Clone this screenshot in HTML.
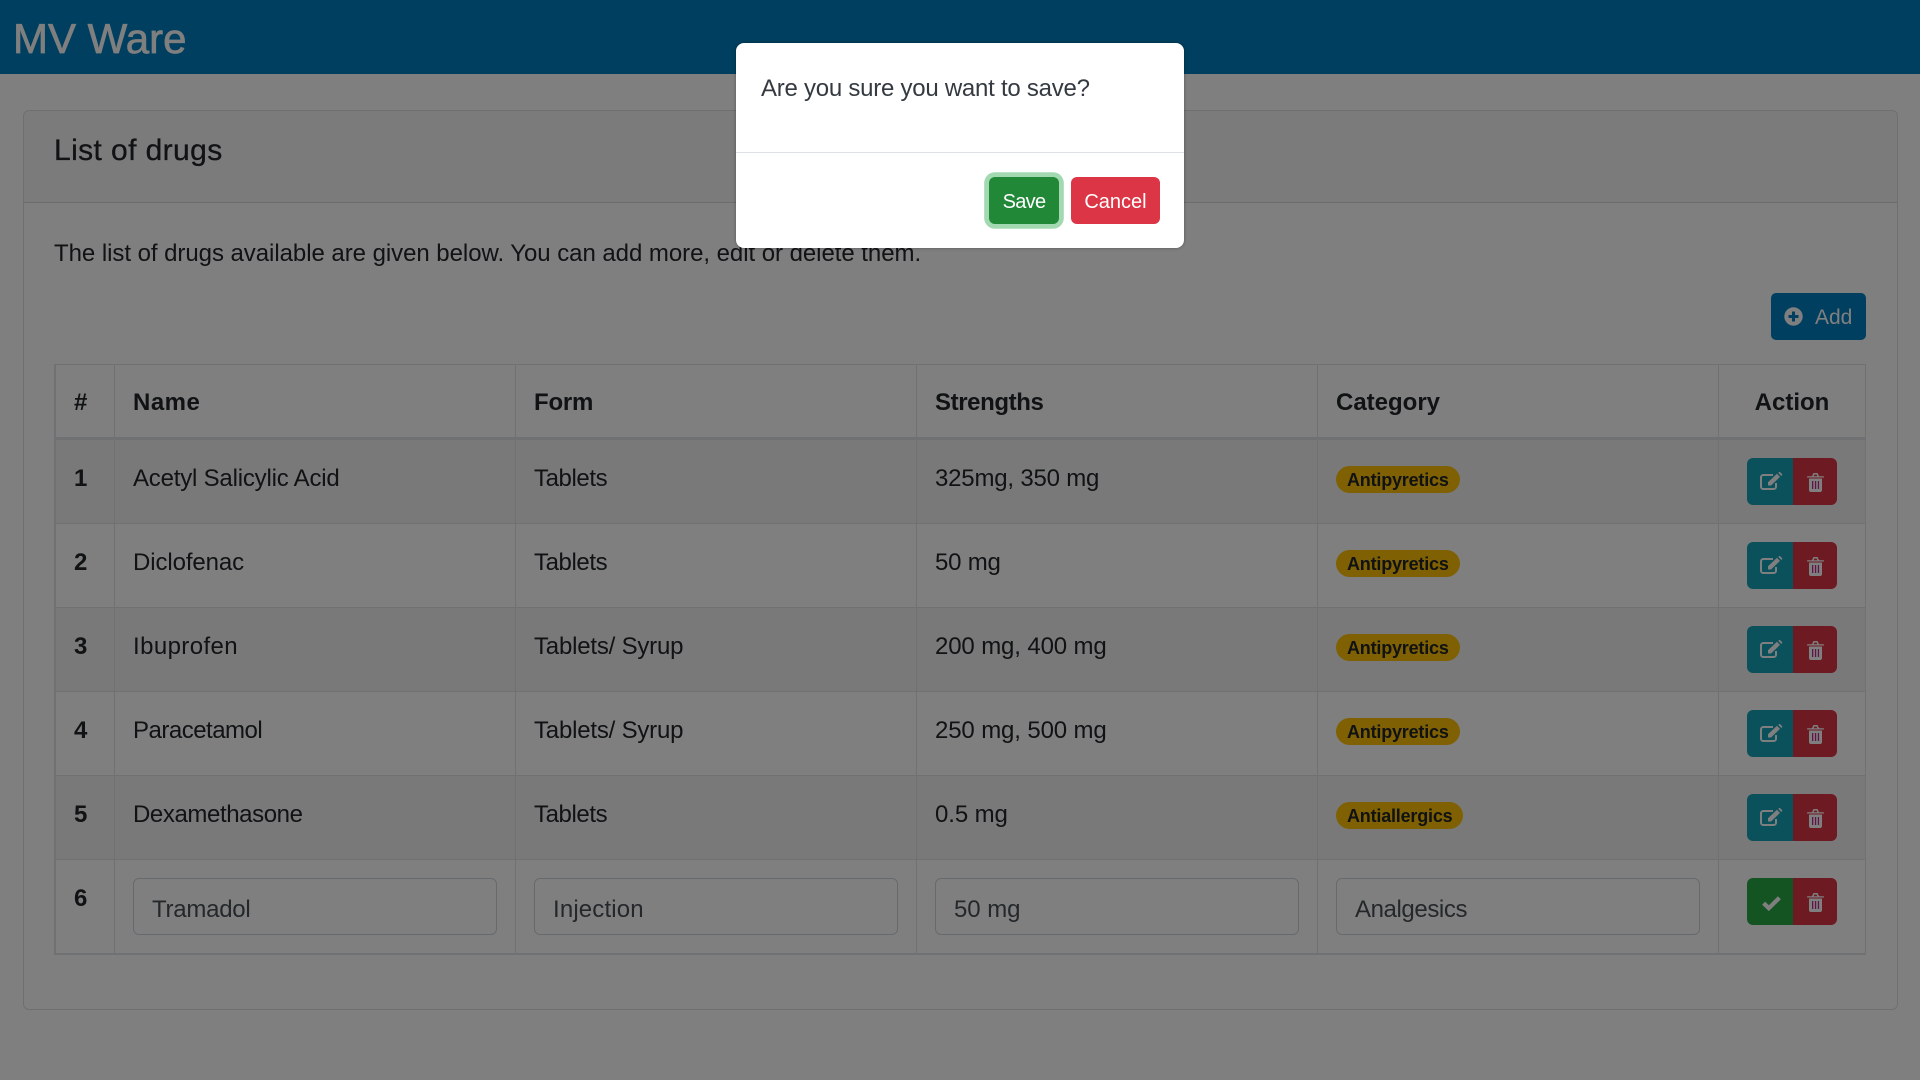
<!DOCTYPE html>
<html lang="en"><head><meta charset="utf-8"><title>MV Ware</title>
<style>
*{box-sizing:border-box}
html,body{margin:0;padding:0;width:1920px;height:1080px;overflow:hidden;background:#fff;font-family:"Liberation Sans",sans-serif;color:#212529}
.nav{position:absolute;left:0;top:0;width:1920px;height:74px;background:#007ebe}
.brand{position:absolute;left:13px;top:15px;font-size:42px;line-height:48px;font-weight:400;color:#fff;-webkit-text-stroke:.7px #fff}
.card{position:absolute;left:23px;top:110px;width:1875px;height:900px;border:1px solid rgba(0,0,0,.125);border-radius:6px}
.card-h{position:absolute;left:0;top:0;width:100%;height:92px;background:rgba(0,0,0,.03);border-bottom:1px solid rgba(0,0,0,.125);border-radius:5px 5px 0 0}
.card-h h5{position:absolute;left:30px;top:22px;margin:0;font-size:30px;line-height:36px;font-weight:400;letter-spacing:.4px;-webkit-text-stroke:.3px #212529}
.lead{position:absolute;left:54px;top:236px;margin:0;font-size:24px;line-height:36px;letter-spacing:-.05px}
.add{position:absolute;left:1771px;top:293px;width:95px;height:47px;background:#007ebe;border:0;border-radius:5px;color:#fff;padding:0;font:21px/47px "Liberation Sans",sans-serif}
.add svg{position:absolute;left:13px;top:14px}
.add span{position:absolute;left:44px;top:1px}
table{position:absolute;left:54px;top:364px;width:1812px;table-layout:fixed;border-collapse:separate;border-spacing:0;border-left:2px solid #dee2e6;border-top:1px solid #dee2e6;font-size:24px;line-height:36px;letter-spacing:-.2px}
th,td{border-right:1px solid #dee2e6;border-bottom:1px solid #dee2e6;padding:21px 18px 0;vertical-align:top;text-align:left;overflow:visible}
th{height:75px;border-bottom-width:3px;padding-top:20px;font-weight:700;letter-spacing:0}
td{height:84px}
td:first-child{font-weight:700;letter-spacing:0}
tbody tr:nth-child(odd){background:rgba(0,0,0,.05)}
tr.last td{height:95px;padding-top:21px;border-bottom-width:2px}
.c{text-align:center}
td.k{padding-top:26px}
.badge{display:inline-block;vertical-align:top;height:27px;line-height:28px;padding:0 11px;background:#ffc107;border-radius:14px;font-size:18px;font-weight:700;letter-spacing:-.2px;color:#212529;white-space:nowrap}
td.a{padding:18px 0 0}
tr.last td.a{padding-top:18px}
.grp{display:flex;width:90px;height:47px;margin:0 auto;border-radius:6px;overflow:hidden}
.grp button{border:0;padding:0;height:47px;position:relative}
.e{width:46px;background:#17a2b8}.g{width:46px;background:#28a745}.d{width:44px;background:#dc3545}
.grp svg{position:absolute}
.e svg{left:13px;top:14px}.g svg{left:15px;top:18px}.d svg{left:14px;top:15px}
tr.last td.i{padding-top:18px}
tr.last td input{display:block;width:364px;height:57px;margin:0;border:1px solid #ced4da;border-radius:6px;background:transparent;padding:7px 18px 0 18px;font:24px "Liberation Sans",sans-serif;letter-spacing:-.3px;color:#495057;outline:0}
.ov{position:absolute;left:0;top:0;width:1920px;height:1080px;background:rgba(0,0,0,.5)}
.modal{position:absolute;left:736px;top:43px;width:448px;height:205px;background:#fff;border-radius:8px;box-shadow:0 0 3px rgba(0,0,0,.35)}
.modal p{position:absolute;left:25px;top:28px;margin:0;font-size:24px;line-height:36px;letter-spacing:-.25px;color:#343a40}
.modal hr{position:absolute;left:0;top:109px;width:100%;margin:0;border:0;border-top:1px solid #dee2e6}
.btn{position:absolute;top:134px;height:47px;border:0;border-radius:6px;color:#fff;padding:3px 0 0;font:20px/44px "Liberation Sans",sans-serif}
.save{left:253px;width:70px;background:#218838;box-shadow:0 0 0 4.8px rgba(72,180,97,.5);letter-spacing:-.7px}
.cancel{left:335px;width:89px;background:#dc3545}
</style></head><body>
<div class="nav"><div class="brand">MV Ware</div></div>
<div class="card"><div class="card-h"><h5>List of drugs</h5></div></div>
<p class="lead">The list of drugs available are given below. You can add more, edit or delete them.</p>
<button class="add"><svg width="19" height="19" viewBox="0 0 19 19"><circle cx="9.5" cy="9.5" r="9.2" fill="#fff"/><path d="M8 4.5h3V8h3.5v3H11v3.5H8V11H4.5V8H8z" fill="#007ebe"/></svg><span>Add</span></button>
<table>
<colgroup><col style="width:59px"><col style="width:401px"><col style="width:401px"><col style="width:401px"><col style="width:401px"><col style="width:147px"></colgroup>
<thead><tr><th>#</th><th style="letter-spacing:.5px">Name</th><th style="letter-spacing:-.2px">Form</th><th style="letter-spacing:-.4px">Strengths</th><th>Category</th><th class="c">Action</th></tr></thead>
<tbody>
<tr><td>1</td><td>Acetyl Salicylic Acid</td><td style="letter-spacing:-.4px">Tablets</td><td>325mg, 350 mg</td><td class="k"><span class="badge">Antipyretics</span></td><td class="a"><div class="grp"><button class="e"><svg width="23" height="19" viewBox="0 0 23 19"><path d="M16 11v3.7a2.3 2.3 0 0 1-2.3 2.3H3.3A2.3 2.3 0 0 1 1 14.7V5.3A2.3 2.3 0 0 1 3.3 3H13" fill="none" stroke="#fff" stroke-width="2"/><path d="M8 10.2 17 1.8l3 3.1-9 8.6H8zM18.2.7l.7-.5a1 1 0 0 1 1.3 0l1.8 1.8a1 1 0 0 1 0 1.3l-.7.7z" fill="#fff"/></svg></button><button class="d"><svg width="17" height="19" viewBox="0 0 17 19"><path d="M5 3.2 6 .9A1.3 1.3 0 0 1 7 0h3a1.3 1.3 0 0 1 1 .9l1 2.3h4.3a.7.7 0 0 1 .7.7v.6H0v-.6a.7.7 0 0 1 .7-.7zM6.7 3.2h3.6L9.6 1.5H7.4zM2 5.5h13V17a2 2 0 0 1-2 2H4a2 2 0 0 1-2-2z" fill="#fff"/><path d="M5 8h1.3v8H5zM7.9 8h1.3v8H7.9zM10.8 8h1.3v8h-1.3z" fill="#c0288c"/></svg></button></div></td></tr>
<tr><td>2</td><td style="letter-spacing:-.1px">Diclofenac</td><td style="letter-spacing:-.4px">Tablets</td><td>50 mg</td><td class="k"><span class="badge">Antipyretics</span></td><td class="a"><div class="grp"><button class="e"><svg width="23" height="19" viewBox="0 0 23 19"><path d="M16 11v3.7a2.3 2.3 0 0 1-2.3 2.3H3.3A2.3 2.3 0 0 1 1 14.7V5.3A2.3 2.3 0 0 1 3.3 3H13" fill="none" stroke="#fff" stroke-width="2"/><path d="M8 10.2 17 1.8l3 3.1-9 8.6H8zM18.2.7l.7-.5a1 1 0 0 1 1.3 0l1.8 1.8a1 1 0 0 1 0 1.3l-.7.7z" fill="#fff"/></svg></button><button class="d"><svg width="17" height="19" viewBox="0 0 17 19"><path d="M5 3.2 6 .9A1.3 1.3 0 0 1 7 0h3a1.3 1.3 0 0 1 1 .9l1 2.3h4.3a.7.7 0 0 1 .7.7v.6H0v-.6a.7.7 0 0 1 .7-.7zM6.7 3.2h3.6L9.6 1.5H7.4zM2 5.5h13V17a2 2 0 0 1-2 2H4a2 2 0 0 1-2-2z" fill="#fff"/><path d="M5 8h1.3v8H5zM7.9 8h1.3v8H7.9zM10.8 8h1.3v8h-1.3z" fill="#c0288c"/></svg></button></div></td></tr>
<tr><td>3</td><td style="letter-spacing:.4px">Ibuprofen</td><td>Tablets/ Syrup</td><td style="letter-spacing:-.13px">200 mg, 400 mg</td><td class="k"><span class="badge">Antipyretics</span></td><td class="a"><div class="grp"><button class="e"><svg width="23" height="19" viewBox="0 0 23 19"><path d="M16 11v3.7a2.3 2.3 0 0 1-2.3 2.3H3.3A2.3 2.3 0 0 1 1 14.7V5.3A2.3 2.3 0 0 1 3.3 3H13" fill="none" stroke="#fff" stroke-width="2"/><path d="M8 10.2 17 1.8l3 3.1-9 8.6H8zM18.2.7l.7-.5a1 1 0 0 1 1.3 0l1.8 1.8a1 1 0 0 1 0 1.3l-.7.7z" fill="#fff"/></svg></button><button class="d"><svg width="17" height="19" viewBox="0 0 17 19"><path d="M5 3.2 6 .9A1.3 1.3 0 0 1 7 0h3a1.3 1.3 0 0 1 1 .9l1 2.3h4.3a.7.7 0 0 1 .7.7v.6H0v-.6a.7.7 0 0 1 .7-.7zM6.7 3.2h3.6L9.6 1.5H7.4zM2 5.5h13V17a2 2 0 0 1-2 2H4a2 2 0 0 1-2-2z" fill="#fff"/><path d="M5 8h1.3v8H5zM7.9 8h1.3v8H7.9zM10.8 8h1.3v8h-1.3z" fill="#c0288c"/></svg></button></div></td></tr>
<tr><td>4</td><td style="letter-spacing:-.5px">Paracetamol</td><td>Tablets/ Syrup</td><td style="letter-spacing:-.13px">250 mg, 500 mg</td><td class="k"><span class="badge">Antipyretics</span></td><td class="a"><div class="grp"><button class="e"><svg width="23" height="19" viewBox="0 0 23 19"><path d="M16 11v3.7a2.3 2.3 0 0 1-2.3 2.3H3.3A2.3 2.3 0 0 1 1 14.7V5.3A2.3 2.3 0 0 1 3.3 3H13" fill="none" stroke="#fff" stroke-width="2"/><path d="M8 10.2 17 1.8l3 3.1-9 8.6H8zM18.2.7l.7-.5a1 1 0 0 1 1.3 0l1.8 1.8a1 1 0 0 1 0 1.3l-.7.7z" fill="#fff"/></svg></button><button class="d"><svg width="17" height="19" viewBox="0 0 17 19"><path d="M5 3.2 6 .9A1.3 1.3 0 0 1 7 0h3a1.3 1.3 0 0 1 1 .9l1 2.3h4.3a.7.7 0 0 1 .7.7v.6H0v-.6a.7.7 0 0 1 .7-.7zM6.7 3.2h3.6L9.6 1.5H7.4zM2 5.5h13V17a2 2 0 0 1-2 2H4a2 2 0 0 1-2-2z" fill="#fff"/><path d="M5 8h1.3v8H5zM7.9 8h1.3v8H7.9zM10.8 8h1.3v8h-1.3z" fill="#c0288c"/></svg></button></div></td></tr>
<tr><td>5</td><td style="letter-spacing:-.4px">Dexamethasone</td><td style="letter-spacing:-.4px">Tablets</td><td style="letter-spacing:-.1px">0.5 mg</td><td class="k"><span class="badge">Antiallergics</span></td><td class="a"><div class="grp"><button class="e"><svg width="23" height="19" viewBox="0 0 23 19"><path d="M16 11v3.7a2.3 2.3 0 0 1-2.3 2.3H3.3A2.3 2.3 0 0 1 1 14.7V5.3A2.3 2.3 0 0 1 3.3 3H13" fill="none" stroke="#fff" stroke-width="2"/><path d="M8 10.2 17 1.8l3 3.1-9 8.6H8zM18.2.7l.7-.5a1 1 0 0 1 1.3 0l1.8 1.8a1 1 0 0 1 0 1.3l-.7.7z" fill="#fff"/></svg></button><button class="d"><svg width="17" height="19" viewBox="0 0 17 19"><path d="M5 3.2 6 .9A1.3 1.3 0 0 1 7 0h3a1.3 1.3 0 0 1 1 .9l1 2.3h4.3a.7.7 0 0 1 .7.7v.6H0v-.6a.7.7 0 0 1 .7-.7zM6.7 3.2h3.6L9.6 1.5H7.4zM2 5.5h13V17a2 2 0 0 1-2 2H4a2 2 0 0 1-2-2z" fill="#fff"/><path d="M5 8h1.3v8H5zM7.9 8h1.3v8H7.9zM10.8 8h1.3v8h-1.3z" fill="#c0288c"/></svg></button></div></td></tr>
<tr class="last" style="background:none"><td>6</td><td class="i"><input value="Tramadol" style="letter-spacing:-.25px"></td><td class="i"><input value="Injection" style="letter-spacing:.15px"></td><td class="i"><input value="50 mg" style="letter-spacing:-.05px"></td><td class="i"><input value="Analgesics" style="letter-spacing:-.4px"></td><td class="a"><div class="grp"><button class="g"><svg width="19" height="15" viewBox="0 0 19 15"><path d="M1.6 7.2 6.8 12.2 17.4 1.8" fill="none" stroke="#fff" stroke-width="4.2"/></svg></button><button class="d"><svg width="17" height="19" viewBox="0 0 17 19"><path d="M5 3.2 6 .9A1.3 1.3 0 0 1 7 0h3a1.3 1.3 0 0 1 1 .9l1 2.3h4.3a.7.7 0 0 1 .7.7v.6H0v-.6a.7.7 0 0 1 .7-.7zM6.7 3.2h3.6L9.6 1.5H7.4zM2 5.5h13V17a2 2 0 0 1-2 2H4a2 2 0 0 1-2-2z" fill="#fff"/><path d="M5 8h1.3v8H5zM7.9 8h1.3v8H7.9zM10.8 8h1.3v8h-1.3z" fill="#c0288c"/></svg></button></div></td></tr>
</tbody></table>
<div class="ov"></div>
<div class="modal"><p>Are you sure you want to save?</p><hr><button class="btn save">Save</button><button class="btn cancel">Cancel</button></div>
</body></html>
